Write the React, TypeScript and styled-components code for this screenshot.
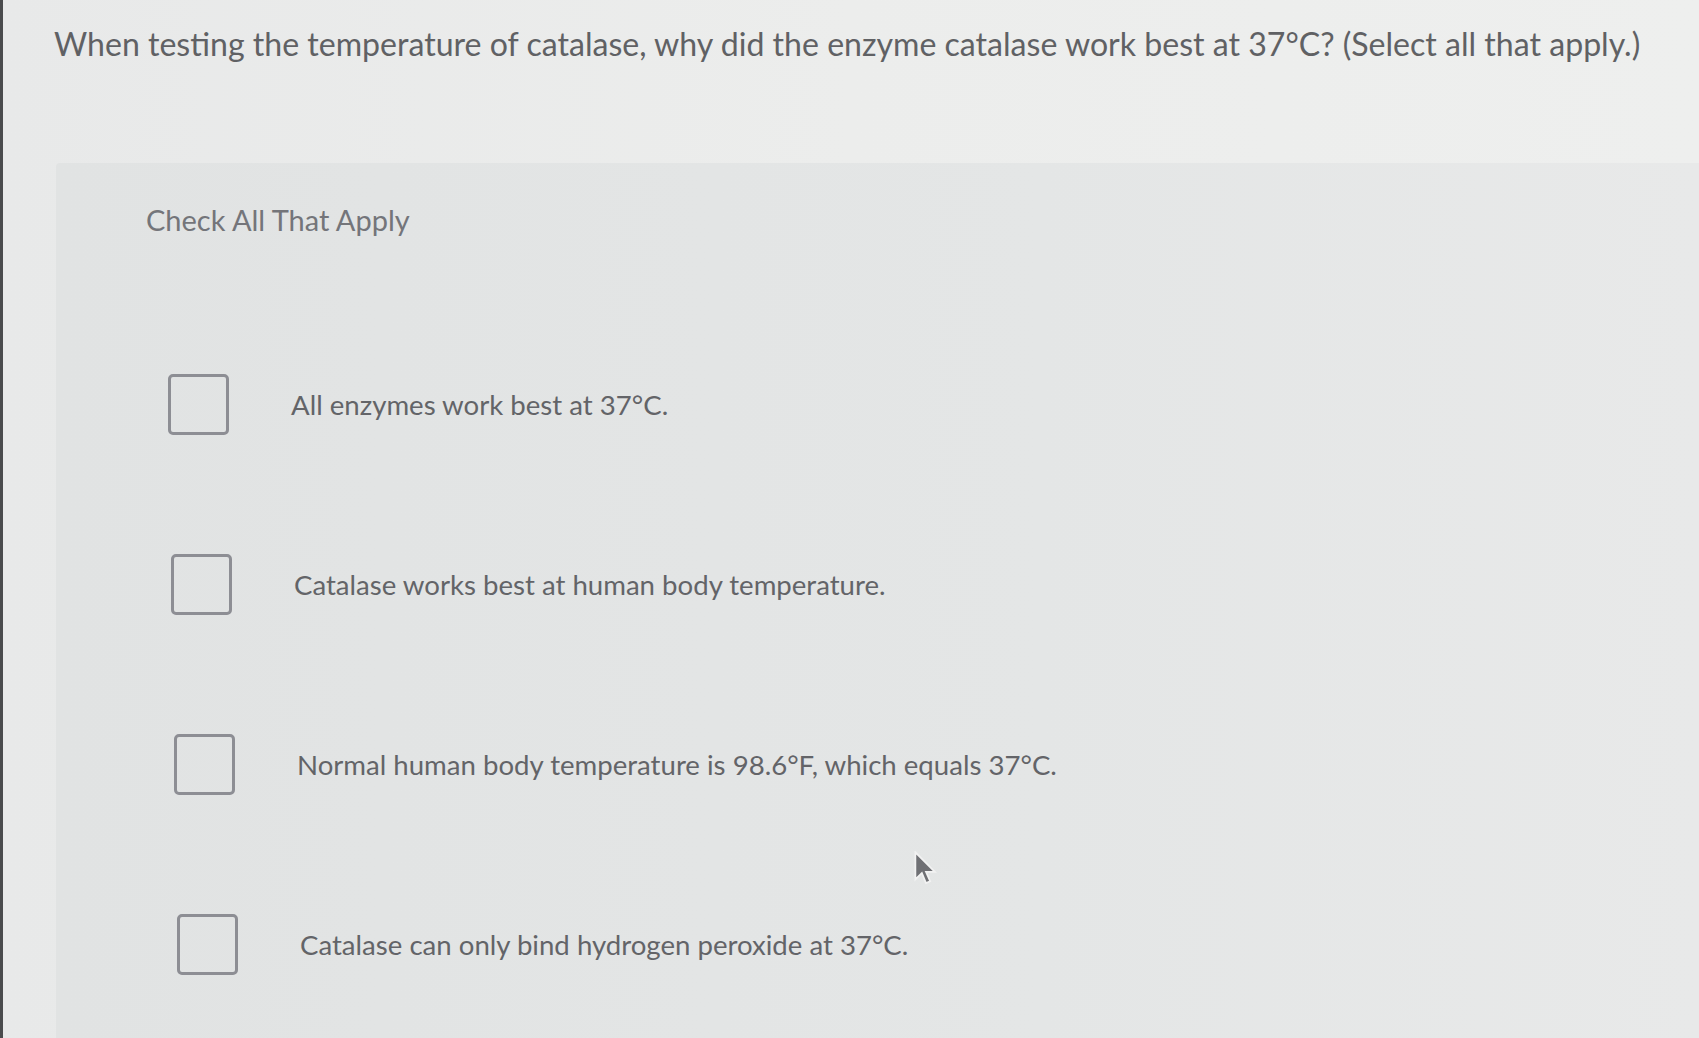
import styled, { createGlobalStyle } from 'styled-components';

const GlobalStyle = createGlobalStyle`
  html, body {
    margin: 0;
    padding: 0;
    background: #eaebeb;
  }
  #root {
    min-height: 100vh;
  }
`;

const Page = styled.div`
  position: relative;
  min-height: 1038px;
  box-sizing: border-box;
  padding: 22px 0 0 0;
  border-left: 3px solid #4a4b4d;
  background: linear-gradient(90deg, #e8e9e9 0%, #ecedec 50%, #eeefee 100%);
  font-family: Lato, 'Open Sans', sans-serif;
  color: #66676a;
  overflow: hidden;
`;

const Question = styled.h1`
  margin: 0 0 0 51px;
  font-size: 32.1px;
  font-weight: 400;
  line-height: 44px;
  color: #606164;
  white-space: nowrap;
`;

const Panel = styled.section`
  margin: 97px 0 0 53px;
  min-height: 875px;
  padding: 40px 0 0 0;
  background: linear-gradient(90deg, #e1e3e3 0%, #e4e6e6 60%, #e8e9e9 100%);
  border-top-left-radius: 4px;
`;

const Instructions = styled.div`
  margin-left: 90px;
  font-size: 29px;
  line-height: 34px;
  color: #74757a;
`;

const Options = styled.ul`
  list-style: none;
  margin: 137px 0 0 0;
  padding: 0 0 0 112px;
  display: flex;
  flex-direction: column;
  gap: 120px;
`;

const Option = styled.li<{ shift: number }>`
  display: flex;
  align-items: center;
  gap: 62px;
  height: 60px;
  margin-left: ${(p) => p.shift}px;
`;

const Box = styled.span`
  flex: none;
  width: 55px;
  height: 55px;
  border: 3px solid #8d8e94;
  border-radius: 5px;
  box-sizing: content-box;
`;

const Label = styled.span`
  font-size: 27.6px;
  color: #636468;
  white-space: nowrap;
`;

const Pointer = styled.svg`
  position: absolute;
  left: 910px;
  top: 851px;
`;

const options = [
  'All enzymes work best at 37°C.',
  'Catalase works best at human body temperature.',
  'Normal human body temperature is 98.6°F, which equals 37°C.',
  'Catalase can only bind hydrogen peroxide at 37°C.',
];

export default function App() {
  return (
    <Page>
      <GlobalStyle />
      <Question>
        When testing the temperature of catalase, why did the enzyme catalase work best at 37°C? (Select all that apply.)
      </Question>
      <Panel>
        <Instructions>Check All That Apply</Instructions>
        <Options>
          {options.map((text, i) => (
            <Option key={text} shift={i * 3}>
              <Box />
              <Label>{text}</Label>
            </Option>
          ))}
        </Options>
      </Panel>
      <Pointer width="26" height="38" viewBox="0 0 22 32">
        <path d="M2 1 L2 24 L7.5 18.5 L11 27 L14.5 25.5 L11 17.5 L18.5 17.5 Z" fill="#6f7074" stroke="#f2f2f2" strokeWidth="1.5" />
      </Pointer>
    </Page>
  );
}
